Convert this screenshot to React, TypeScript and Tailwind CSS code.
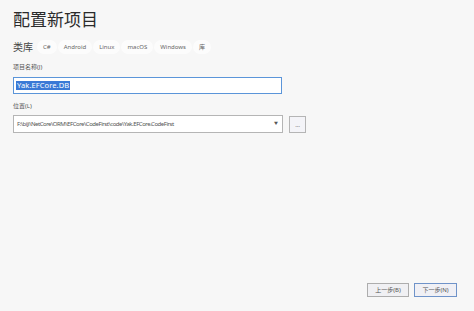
import React from "react";

const tags = ["C#", "Android", "Linux", "macOS", "Windows", "库"];

export default function App() {
  return (
    <div
      className="w-[474px] h-[311px] bg-[#f7f7f7] flex flex-col pl-[13px] pr-[17px] text-[#1e1e1e] overflow-hidden"
      style={{ fontFamily: '"Noto Sans", "Noto Sans CJK SC", sans-serif' }}
    >
      {/* Title */}
      <h1 className="mt-[10px] text-[17px] leading-[19px] font-normal text-[#2b2b2b]">配置新项目</h1>

      {/* Tags row */}
      <div className="mt-[11px] flex items-center h-[14px]">
        <span className="text-[10px] leading-[14px] text-[#444] mr-[4px]">类库</span>
        <div className="flex items-center gap-[1px]">
          {tags.map((t) => (
            <span
              key={t}
              className="px-[6px] h-[14px] flex items-center rounded-[7px] bg-[#fcfcfc] text-[6px] text-[#666]"
            >
              {t}
            </span>
          ))}
        </div>
      </div>

      {/* Project name */}
      <label className="mt-[9px] text-[6px] leading-[8px] text-[#555]">项目名称(J)</label>
      <div className="mt-[6px] w-[269px] h-[17px] bg-white border border-[#5b95d9] flex items-center pl-[2px]">
        <span className="bg-[#3a79d6] text-white text-[7.5px] leading-[9px] px-[1px] tracking-[0.1px]">Yak.EFCore.DB</span>
      </div>

      {/* Location */}
      <label className="mt-[8px] text-[6px] leading-[8px] text-[#555]">位置(L)</label>
      <div className="mt-[5px] flex items-center gap-[6px]">
        <div className="w-[270px] h-[18px] bg-white border border-[#b5b5b5] flex items-center justify-between pl-[3px] pr-[4px]">
          <span className="text-[6px] tracking-[-0.45px] text-[#555] whitespace-nowrap">
            F:\biji\NetCore\ORM\EFCore\CodeFirst\code\Yak.EFCore.CodeFirst
          </span>
          <span className="text-[4px] text-[#555]">▼</span>
        </div>
        <div className="w-[17px] h-[17px] bg-[#f4f4f8] border border-[#b5b5b5] flex items-end justify-center pb-[4px]">
          <span className="text-[6px] leading-[6px] text-[#666]">…</span>
        </div>
      </div>

      {/* Bottom buttons */}
      <div className="mt-auto mb-[14px] flex justify-end gap-[5px]">
        <button className="w-[42px] h-[14px] bg-[#f0f0f3] border border-[#adadad] text-[6px] text-[#555] flex items-center justify-center">
          上一步(B)
        </button>
        <button className="w-[43px] h-[14px] bg-[#f0f0f5] border border-[#6f93c9] text-[6px] text-[#555] flex items-center justify-center">
          下一步(N)
        </button>
      </div>
    </div>
  );
}
